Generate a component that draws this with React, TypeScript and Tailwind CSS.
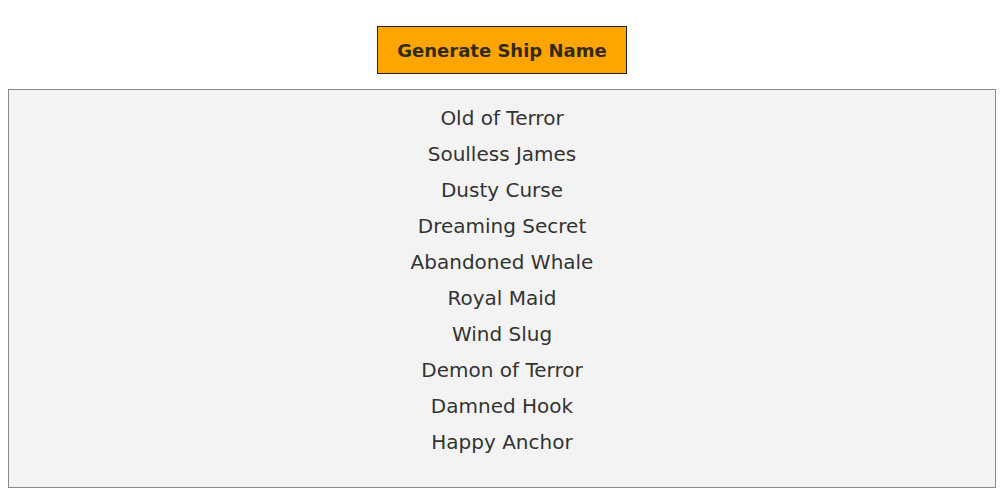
import React from "react";

const names = [
  "Old of Terror",
  "Soulless James",
  "Dusty Curse",
  "Dreaming Secret",
  "Abandoned Whale",
  "Royal Maid",
  "Wind Slug",
  "Demon of Terror",
  "Damned Hook",
  "Happy Anchor",
];

export default function App() {
  return (
    <div className="w-[1006px] h-[497px] bg-white pl-[8px] pt-[26px] font-['Verdana','DejaVu_Sans',sans-serif]">
      <div className="w-[988px]">
        <div className="flex justify-center">
          <button className="w-[250px] h-[48px] bg-[#ffa500] border border-[#222] text-[#332a14] font-bold text-[18px]">
            Generate Ship Name
          </button>
        </div>
        <div className="mt-[15px] h-[399px] border border-[#8a8a8a] bg-[#f3f3f3] pt-[10px] flex flex-col items-center">
          {names.map((n) => (
            <div key={n} className="h-[36px] leading-[36px] text-[20px] text-[#333]">
              {n}
            </div>
          ))}
        </div>
      </div>
    </div>
  );
}
